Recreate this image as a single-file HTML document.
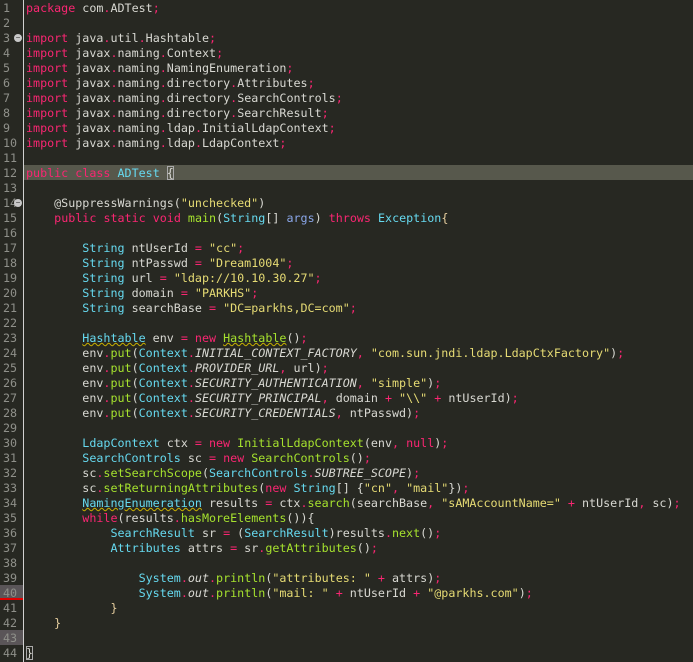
<!DOCTYPE html>
<html><head><meta charset="utf-8"><style>
html,body{margin:0;padding:0;background:#272822;width:693px;height:662px;overflow:hidden}
#g{position:absolute;left:0;top:0;width:23px;height:662px;background:#272822;border-right:1px solid #d0d0d0}
.n{position:absolute;left:0;width:23px;height:15px;line-height:15px;text-align:left;padding-left:3px;box-sizing:border-box;color:#8f908a;font:11.7px "DejaVu Sans Mono",monospace;transform:translateY(1px)}
.l{position:absolute;left:26px;height:15px;line-height:15px;white-space:pre;color:#d8d8d2;font:11.7px "DejaVu Sans Mono",monospace;right:0;transform:translateY(1px)}
.k,.p{color:#F92672}.t{color:#66D9EF}.s{color:#E6DB74}.f{color:#A6E22E}.i{font-style:italic}.a{color:#8aa6e8}.o{color:#e8d0a0}
.w{text-decoration:underline wavy #c8b000;text-decoration-thickness:1px;text-underline-offset:0px}
.fold{position:absolute;left:14px;width:8px;height:8px;border-radius:50%;background:#c8c8c8;color:#333;font:8px sans-serif;line-height:8px;text-align:center}
.bx{outline:1px solid #aaa;outline-offset:-1px}
</style></head><body>
<div id="g"></div>
<div style="position:absolute;left:24px;top:165px;width:669px;height:15px;background:#57584c"></div>
<div style="position:absolute;left:0;top:585px;width:23px;height:15px;background:#5a5558;border-bottom:2px solid #e00000;box-sizing:border-box"></div>
<div style="position:absolute;left:0;top:630px;width:23px;height:15px;background:#5a5558"></div>
<div class="n" style="top:0">1</div><div class="n" style="top:15px">2</div><div class="n" style="top:30px">3</div><div class="n" style="top:45px">4</div><div class="n" style="top:60px">5</div><div class="n" style="top:75px">6</div><div class="n" style="top:90px">7</div><div class="n" style="top:105px">8</div><div class="n" style="top:120px">9</div><div class="n" style="top:135px">10</div><div class="n" style="top:150px">11</div><div class="n" style="top:165px">12</div><div class="n" style="top:180px">13</div><div class="n" style="top:195px">14</div><div class="n" style="top:210px">15</div><div class="n" style="top:225px">16</div><div class="n" style="top:240px">17</div><div class="n" style="top:255px">18</div><div class="n" style="top:270px">19</div><div class="n" style="top:285px">20</div><div class="n" style="top:300px">21</div><div class="n" style="top:315px">22</div><div class="n" style="top:330px">23</div><div class="n" style="top:345px">24</div><div class="n" style="top:360px">25</div><div class="n" style="top:375px">26</div><div class="n" style="top:390px">27</div><div class="n" style="top:405px">28</div><div class="n" style="top:420px">29</div><div class="n" style="top:435px">30</div><div class="n" style="top:450px">31</div><div class="n" style="top:465px">32</div><div class="n" style="top:480px">33</div><div class="n" style="top:495px">34</div><div class="n" style="top:510px">35</div><div class="n" style="top:525px">36</div><div class="n" style="top:540px">37</div><div class="n" style="top:555px">38</div><div class="n" style="top:570px">39</div><div class="n" style="top:585px">40</div><div class="n" style="top:600px">41</div><div class="n" style="top:615px">42</div><div class="n" style="top:630px">43</div><div class="n" style="top:645px">44</div>
<div class="fold" style="top:34px">−</div><div class="fold" style="top:199px">−</div>

<div class="l" style="top:0"><span class="k">package</span> com<span class="p">.</span>ADTest<span class="p">;</span></div>
<div class="l" style="top:30px"><span class="k">import</span> java<span class="p">.</span>util<span class="p">.</span>Hashtable<span class="p">;</span></div>
<div class="l" style="top:45px"><span class="k">import</span> javax<span class="p">.</span>naming<span class="p">.</span>Context<span class="p">;</span></div>
<div class="l" style="top:60px"><span class="k">import</span> javax<span class="p">.</span>naming<span class="p">.</span>NamingEnumeration<span class="p">;</span></div>
<div class="l" style="top:75px"><span class="k">import</span> javax<span class="p">.</span>naming<span class="p">.</span>directory<span class="p">.</span>Attributes<span class="p">;</span></div>
<div class="l" style="top:90px"><span class="k">import</span> javax<span class="p">.</span>naming<span class="p">.</span>directory<span class="p">.</span>SearchControls<span class="p">;</span></div>
<div class="l" style="top:105px"><span class="k">import</span> javax<span class="p">.</span>naming<span class="p">.</span>directory<span class="p">.</span>SearchResult<span class="p">;</span></div>
<div class="l" style="top:120px"><span class="k">import</span> javax<span class="p">.</span>naming<span class="p">.</span>ldap<span class="p">.</span>InitialLdapContext<span class="p">;</span></div>
<div class="l" style="top:135px"><span class="k">import</span> javax<span class="p">.</span>naming<span class="p">.</span>ldap<span class="p">.</span>LdapContext<span class="p">;</span></div>
<div class="l" style="top:165px"><span class="k">public</span> <span class="k">class</span> <span class="t">ADTest</span> <span class="bx">{</span></div>
<div class="l" style="top:195px">    @SuppressWarnings(<span class="s">"unchecked"</span>)</div>
<div class="l" style="top:210px">    <span class="k">public</span> <span class="k">static</span> <span class="k">void</span> <span class="f">main</span>(<span class="t">String</span>[] <span class="a">args</span>) <span class="k">throws</span> <span class="t">Exception</span><span class="o">{</span></div>
<div class="l" style="top:240px">        <span class="t">String</span> ntUserId <span class="p">=</span> <span class="s">"cc"</span><span class="p">;</span></div>
<div class="l" style="top:255px">        <span class="t">String</span> ntPasswd <span class="p">=</span> <span class="s">"Dream1004"</span><span class="p">;</span></div>
<div class="l" style="top:270px">        <span class="t">String</span> url <span class="p">=</span> <span class="s">"ldap://10.10.30.27"</span><span class="p">;</span></div>
<div class="l" style="top:285px">        <span class="t">String</span> domain <span class="p">=</span> <span class="s">"PARKHS"</span><span class="p">;</span></div>
<div class="l" style="top:300px">        <span class="t">String</span> searchBase <span class="p">=</span> <span class="s">"DC=parkhs,DC=com"</span><span class="p">;</span></div>
<div class="l" style="top:330px">        <span class="t w">Hashtable</span> env <span class="p">=</span> <span class="k">new</span> <span class="f w">Hashtable</span>()<span class="p">;</span></div>
<div class="l" style="top:345px">        env<span class="p">.</span><span class="f">put</span>(<span class="t">Context</span><span class="p">.</span><span class="i">INITIAL_CONTEXT_FACTORY</span><span class="p">,</span> <span class="s">"com.sun.jndi.ldap.LdapCtxFactory"</span>)<span class="p">;</span></div>
<div class="l" style="top:360px">        env<span class="p">.</span><span class="f">put</span>(<span class="t">Context</span><span class="p">.</span><span class="i">PROVIDER_URL</span><span class="p">,</span> url)<span class="p">;</span></div>
<div class="l" style="top:375px">        env<span class="p">.</span><span class="f">put</span>(<span class="t">Context</span><span class="p">.</span><span class="i">SECURITY_AUTHENTICATION</span><span class="p">,</span> <span class="s">"simple"</span>)<span class="p">;</span></div>
<div class="l" style="top:390px">        env<span class="p">.</span><span class="f">put</span>(<span class="t">Context</span><span class="p">.</span><span class="i">SECURITY_PRINCIPAL</span><span class="p">,</span> domain <span class="p">+</span> <span class="s">"\\"</span> <span class="p">+</span> ntUserId)<span class="p">;</span></div>
<div class="l" style="top:405px">        env<span class="p">.</span><span class="f">put</span>(<span class="t">Context</span><span class="p">.</span><span class="i">SECURITY_CREDENTIALS</span><span class="p">,</span> ntPasswd)<span class="p">;</span></div>
<div class="l" style="top:435px">        <span class="t">LdapContext</span> ctx <span class="p">=</span> <span class="k">new</span> <span class="f">InitialLdapContext</span>(env<span class="p">,</span> <span class="k">null</span>)<span class="p">;</span></div>
<div class="l" style="top:450px">        <span class="t">SearchControls</span> sc <span class="p">=</span> <span class="k">new</span> <span class="f">SearchControls</span>()<span class="p">;</span></div>
<div class="l" style="top:465px">        sc<span class="p">.</span><span class="f">setSearchScope</span>(<span class="t">SearchControls</span><span class="p">.</span><span class="i">SUBTREE_SCOPE</span>)<span class="p">;</span></div>
<div class="l" style="top:480px">        sc<span class="p">.</span><span class="f">setReturningAttributes</span>(<span class="k">new</span> <span class="t">String</span>[] {<span class="s">"cn"</span><span class="p">,</span> <span class="s">"mail"</span>})<span class="p">;</span></div>
<div class="l" style="top:495px">        <span class="t w">NamingEnumeration</span> results <span class="p">=</span> ctx<span class="p">.</span><span class="f">search</span>(searchBase<span class="p">,</span> <span class="s">"sAMAccountName="</span> <span class="p">+</span> ntUserId<span class="p">,</span> sc)<span class="p">;</span></div>
<div class="l" style="top:510px">        <span class="k">while</span>(results<span class="p">.</span><span class="f">hasMoreElements</span>()){</div>
<div class="l" style="top:525px">            <span class="t">SearchResult</span> sr <span class="p">=</span> (<span class="t">SearchResult</span>)results<span class="p">.</span><span class="f">next</span>()<span class="p">;</span></div>
<div class="l" style="top:540px">            <span class="t">Attributes</span> attrs <span class="p">=</span> sr<span class="p">.</span><span class="f">getAttributes</span>()<span class="p">;</span></div>
<div class="l" style="top:570px">                <span class="t">System</span><span class="p">.</span><span class="i">out</span><span class="p">.</span><span class="f">println</span>(<span class="s">"attributes: "</span> <span class="p">+</span> attrs)<span class="p">;</span></div>
<div class="l" style="top:585px">                <span class="t">System</span><span class="p">.</span><span class="i">out</span><span class="p">.</span><span class="f">println</span>(<span class="s">"mail: "</span> <span class="p">+</span> ntUserId <span class="p">+</span> <span class="s">"@parkhs.com"</span>)<span class="p">;</span></div>
<div class="l" style="top:600px">            <span class="o">}</span></div>
<div class="l" style="top:615px">    <span class="o">}</span></div>
<div class="l" style="top:645px"><span class="bx">}</span></div>
</body></html>
